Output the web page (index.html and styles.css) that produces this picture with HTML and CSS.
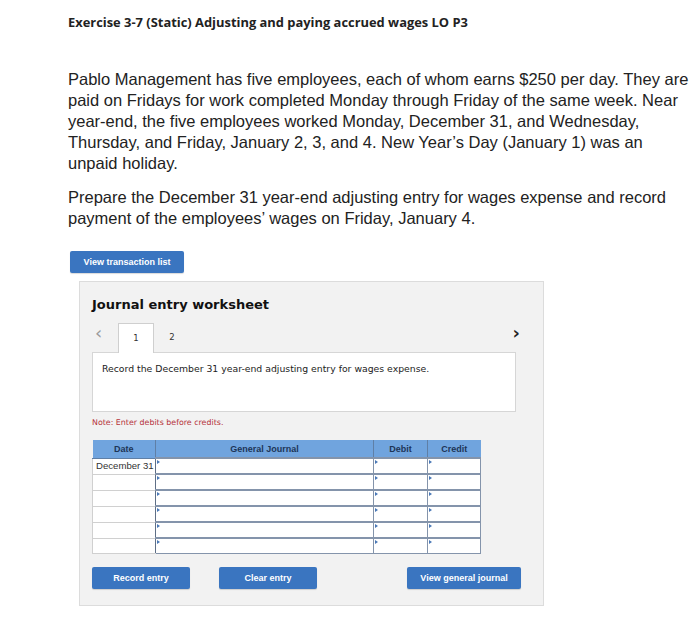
FILE: index.html
```html
<!DOCTYPE html>
<html>
<head>
<meta charset="utf-8">
<link rel="stylesheet" href="styles.css">
</head>
<body>
<div class="page">
  <h1 class="title">Exercise 3-7 (Static) Adjusting and paying accrued wages LO P3</h1>
  <p class="para">Pablo Management has five employees, each of whom earns $250 per day. They are paid on Fridays for work completed Monday through Friday of the same week. Near year-end, the five employees worked Monday, December 31, and Wednesday, Thursday, and Friday, January 2, 3, and 4. New Year’s Day (January 1) was an unpaid holiday.</p>
  <p class="para">Prepare the December 31 year-end adjusting entry for wages expense and record payment of the employees’ wages on Friday, January 4.</p>
  <button class="btn btn-txn">View transaction list</button>

  <div class="panel">
    <h2 class="panel-title">Journal entry worksheet</h2>
    <div class="tabs">
      <span class="arrow prev">&lsaquo;</span>
      <span class="tab active">1</span>
      <span class="tab">2</span>
      <span class="spacer"></span>
      <span class="arrow next">&rsaquo;</span>
    </div>
    <div class="instr">Record the December 31 year-end adjusting entry for wages expense.</div>
    <div class="note">Note: Enter debits before credits.</div>
    <table class="journal">
      <thead>
        <tr><th class="c-date">Date</th><th class="c-gj">General Journal</th><th class="c-dr">Debit</th><th class="c-cr">Credit</th></tr>
      </thead>
      <tbody>
        <tr><td class="date">December 31</td><td class="inp"><div></div></td><td class="inp"><div></div></td><td class="inp"><div></div></td></tr>
        <tr><td class="date"></td><td class="inp"><div></div></td><td class="inp"><div></div></td><td class="inp"><div></div></td></tr>
        <tr><td class="date"></td><td class="inp"><div></div></td><td class="inp"><div></div></td><td class="inp"><div></div></td></tr>
        <tr><td class="date"></td><td class="inp"><div></div></td><td class="inp"><div></div></td><td class="inp"><div></div></td></tr>
        <tr><td class="date"></td><td class="inp"><div></div></td><td class="inp"><div></div></td><td class="inp"><div></div></td></tr>
        <tr><td class="date"></td><td class="inp"><div></div></td><td class="inp"><div></div></td><td class="inp"><div></div></td></tr>
      </tbody>
    </table>
    <div class="actions">
      <button class="btn btn-rec">Record entry</button>
      <button class="btn btn-clr">Clear entry</button>
      <span class="spacer"></span>
      <button class="btn btn-gj">View general journal</button>
    </div>
  </div>
</div>
</body>
</html>
```

FILE: styles.css
```css
html, body {
  margin: 0;
  padding: 0;
  background: #ffffff;
}
.page {
  padding: 14px 0 0 68px;
  width: 632px;
}
.title {
  margin: 0;
  font-family: "Open Sans", "Liberation Sans", sans-serif;
  font-weight: 700;
  font-size: 12.9px;
  line-height: 16px;
  color: #222;
}
.para {
  margin: 39px 0 0 0;
  font-family: "Liberation Sans", Arial, sans-serif;
  font-size: 16.5px;
  line-height: 21px;
  color: #222;
  width: 622px;
}
.para + .para {
  margin-top: 13px;
}
.btn {
  display: block;
  border: none;
  border-radius: 2px;
  background: #3a75c0;
  color: #fff;
  font-family: "Liberation Sans", Arial, sans-serif;
  font-weight: 700;
  font-size: 9px;
  height: 22px;
  padding: 0;
  box-shadow: 0 1px 1px rgba(0,0,0,0.15);
}
.btn-txn {
  margin: 22px 0 0 2px;
  width: 114px;
}
.panel {
  margin: 8px 0 0 11px;
  background: #f2f2f2;
  border: 1px solid #dcdcdc;
  padding: 0 12px;
  box-sizing: border-box;
  width: 465px;
  height: 325px;
}
.panel-title {
  margin: 15px 0 0 0;
  font-family: "DejaVu Sans", Verdana, sans-serif;
  font-weight: 700;
  font-size: 13px;
  line-height: 16px;
  color: #111;
}
.tabs {
  display: flex;
  align-items: stretch;
  height: 29px;
  margin-top: 10px;
  font-family: "DejaVu Sans", Verdana, sans-serif;
  font-size: 8.5px;
  color: #333;
}
.arrow {
  display: flex;
  align-items: center;
  font-size: 18px;
  line-height: 1;
  padding-bottom: 9px;
}
.prev {
  color: #9a9a9a;
  width: 26px;
  padding-left: 3px;
  box-sizing: border-box;
}
.next {
  color: #222;
  font-weight: 700;
  margin-right: 11px;
}
.spacer { flex: 1; }
.tab {
  display: flex;
  align-items: center;
  justify-content: center;
  width: 36px;
  padding-bottom: 2px;
  box-sizing: border-box;
}
.tab.active {
  background: #fff;
  border: 1px solid #cfcfcf;
  border-bottom: none;
  position: relative;
  z-index: 1;
  margin-bottom: -1px;
}
.instr {
  width: 424px;
  height: 60px;
  box-sizing: border-box;
  background: #fff;
  border: 1px solid #d6d6d6;
  padding: 10px 9px;
  font-family: "DejaVu Sans", Verdana, sans-serif;
  font-size: 9.3px;
  color: #222;
}
.note {
  margin-top: 6px;
  font-family: "DejaVu Sans", Verdana, sans-serif;
  font-size: 7.9px;
  line-height: 10px;
  color: #b5323c;
}
.journal {
  margin-top: 12px;
  border-collapse: collapse;
  width: 388px;
  font-family: "Liberation Sans", Arial, sans-serif;
  table-layout: fixed;
}
.journal th {
  background: #70a4de;
  color: #1d3557;
  font-weight: 700;
  font-size: 9px;
  height: 18px;
  padding: 0;
  border-left: 1px solid #5f7fa6;
  border-bottom: 1px solid #5f7fa6;
  box-sizing: border-box;
}
.journal th.c-date { border-left: none; }
.c-date { width: 63px; }
.c-gj { width: 218px; }
.c-dr { width: 54px; }
.c-cr { width: 53px; }
.journal td {
  padding: 0;
  background: #fff;
  line-height: 12px;
}
.journal td.date {
  border: 1px solid #d0d0d0;
  border-right: 1px solid #5f6f86;
  font-size: 9.6px;
  color: #333;
  padding-left: 3px;
  white-space: nowrap;
}
.journal td.inp {
  border: 1px solid #8494ab;
  border-top-width: 2px;
  position: relative;
}
.journal td.inp div {
  height: 14px;
}
.journal td.inp::before {
  content: "";
  position: absolute;
  left: 1px;
  top: 1px;
  border-left: 3px solid #4a78b6;
  border-top: 2px solid transparent;
  border-bottom: 2px solid transparent;
}
.actions {
  display: flex;
  margin-top: 13px;
}
.btn-rec { width: 98px; }
.btn-clr { width: 98px; margin-left: 29px; }
.btn-gj { width: 114px; margin-right: 10px; }
```
